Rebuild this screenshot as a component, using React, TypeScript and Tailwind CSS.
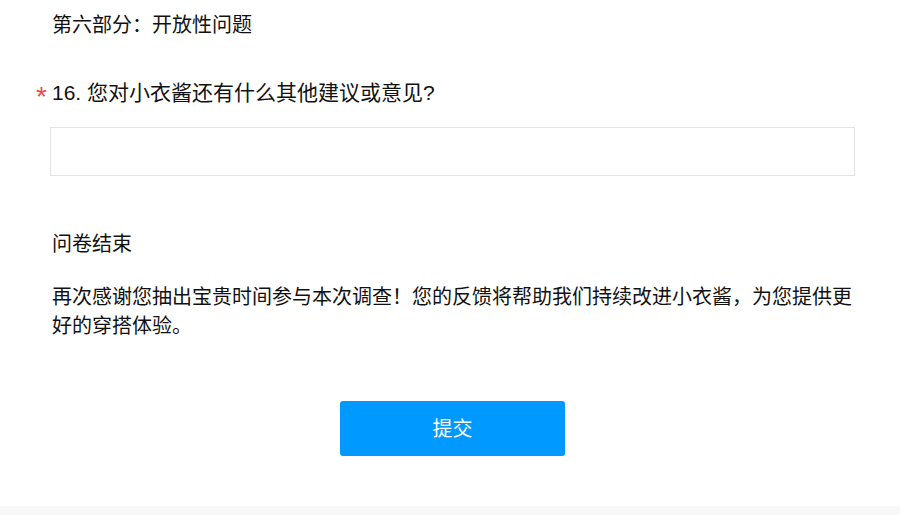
export default function App() {
  return (
    <div className="w-full h-[515px] flex flex-col bg-white text-[#111] font-['Liberation_Sans','Noto_Sans_CJK_SC',sans-serif]">
      <div className="pl-[50px] pr-[45px]">
        {/* section title */}
        <div className="pt-[10px] pl-[2px] text-[20px] leading-[30px]">第六部分：开放性问题</div>

        {/* question 16 */}
        <div className="relative mt-[38px] pl-[2px] text-[21px] leading-[30px]">
          <span className="absolute left-[-14px] top-[5px] text-[28px] leading-[28px] text-[#f5484b]">*</span>
          16. 您对小衣酱还有什么其他建议或意见?
        </div>
        <input
          type="text"
          className="mt-[19px] block w-full h-[49px] border border-[#e3e3e3] px-3 text-[18px] outline-none"
        />

        {/* end of survey */}
        <div className="mt-[53px] pl-[2px] text-[20px] leading-[30px]">问卷结束</div>
        <p className="mt-[24px] pl-[2px] text-[20px] leading-[29px]">
          再次感谢您抽出宝贵时间参与本次调查！您的反馈将帮助我们持续改进小衣酱，为您提供更好的穿搭体验。
        </p>

        <div className="mt-[60px] flex justify-center">
          <button className="w-[225px] h-[55px] rounded-[3px] bg-[#0099ff] text-white text-[20px]">提交</button>
        </div>
      </div>
      <div className="mt-[50px] flex-1 bg-[#f7f7f7]" />
    </div>
  );
}
